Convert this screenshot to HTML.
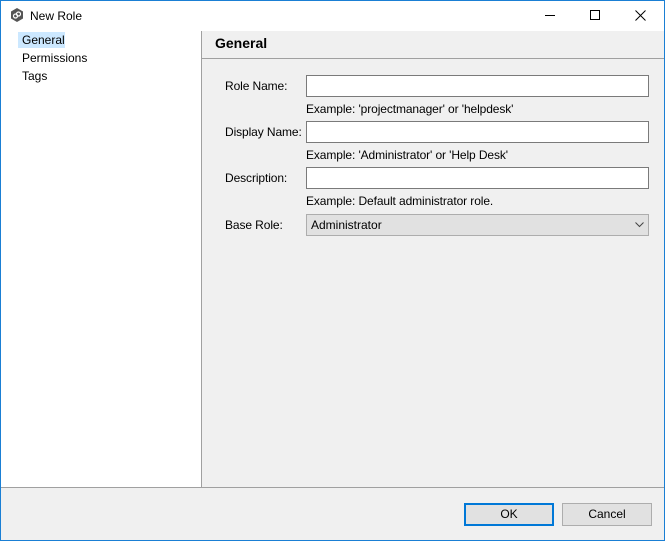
<!DOCTYPE html>
<html><head><style>
*{margin:0;padding:0;box-sizing:border-box}
body{width:665px;height:541px;position:relative;font-family:"Liberation Sans",sans-serif;font-size:12px;color:#000;background:#fff;overflow:hidden}
.win{position:absolute;left:0;top:0;width:665px;height:541px;border:1px solid #1a7fd4}
.abs{position:absolute}
.inp{position:absolute;left:306px;width:343px;height:22px;background:#fff;border:1px solid #7a7a7a}
.lbl{position:absolute;left:225px;letter-spacing:-0.1px}
.ex{position:absolute;left:306px;letter-spacing:-0.1px}
.btn{position:absolute;top:503px;width:90px;height:23px;background:#e1e1e1;border:1px solid #adadad;text-align:center;line-height:21px}
</style></head><body>
<div class="win"></div>
<div class="abs" style="left:10px;top:8px;width:14px;height:14px;">
<svg width="14" height="14" viewBox="0 0 14 14"><polygon points="7,0 13,3.5 13,10.5 7,14 1,10.5 1,3.5" fill="#555"/><circle cx="5.5" cy="8" r="2" fill="none" stroke="#fff" stroke-width="1.2"/><circle cx="8.5" cy="6" r="2" fill="none" stroke="#fff" stroke-width="1.2"/></svg></div>
<div class="abs" style="left:30px;top:9px;font-size:12px">New Role</div>
<div class="abs" style="left:545px;top:15px;width:10px;height:1px;background:#000"></div>
<div class="abs" style="left:590px;top:10px;width:10px;height:10px;border:1px solid #000"></div>
<svg class="abs" style="left:635px;top:10px" width="11" height="11" viewBox="0 0 11 11"><path d="M0.5 0.5L10.5 10.5M10.5 0.5L0.5 10.5" stroke="#000" stroke-width="1"/></svg>
<div class="abs" style="left:18px;top:32px;width:47px;height:16px;background:#cce8ff"></div>
<div class="abs" style="left:22px;top:33px">General</div>
<div class="abs" style="left:22px;top:51px">Permissions</div>
<div class="abs" style="left:22px;top:69px">Tags</div>
<div class="abs" style="left:201px;top:31px;width:463px;height:456px;background:#f0f0f0;border-left:1px solid #a0a0a0"></div>
<div class="abs" style="left:215px;top:35px;font-weight:bold;font-size:14px">General</div>
<div class="abs" style="left:202px;top:58px;width:462px;height:1px;background:#a0a0a0"></div>
<div class="lbl" style="top:79px">Role Name:</div>
<div class="inp" style="top:75px"></div>
<div class="ex" style="top:102px">Example: 'projectmanager' or 'helpdesk'</div>
<div class="lbl" style="top:125px">Display Name:</div>
<div class="inp" style="top:121px"></div>
<div class="ex" style="top:148px">Example: 'Administrator' or 'Help Desk'</div>
<div class="lbl" style="top:171px">Description:</div>
<div class="inp" style="top:167px"></div>
<div class="ex" style="top:194px">Example: Default administrator role.</div>
<div class="lbl" style="top:218px">Base Role:</div>
<div class="inp" style="top:214px;height:22px;background:#e1e1e1;border-color:#adadad;padding-left:4px;line-height:20px">Administrator
<svg class="abs" style="right:4px;top:7px" width="9" height="6" viewBox="0 0 9 6"><path d="M0.5 0.5L4.5 4.5L8.5 0.5" fill="none" stroke="#444"/></svg></div>
<div class="abs" style="left:1px;top:487px;width:663px;height:53px;background:#f0f0f0;border-top:1px solid #a0a0a0"></div>
<div class="btn" style="left:464px;border:2px solid #0078d7;line-height:19px">OK</div>
<div class="btn" style="left:562px">Cancel</div>
</body></html>
